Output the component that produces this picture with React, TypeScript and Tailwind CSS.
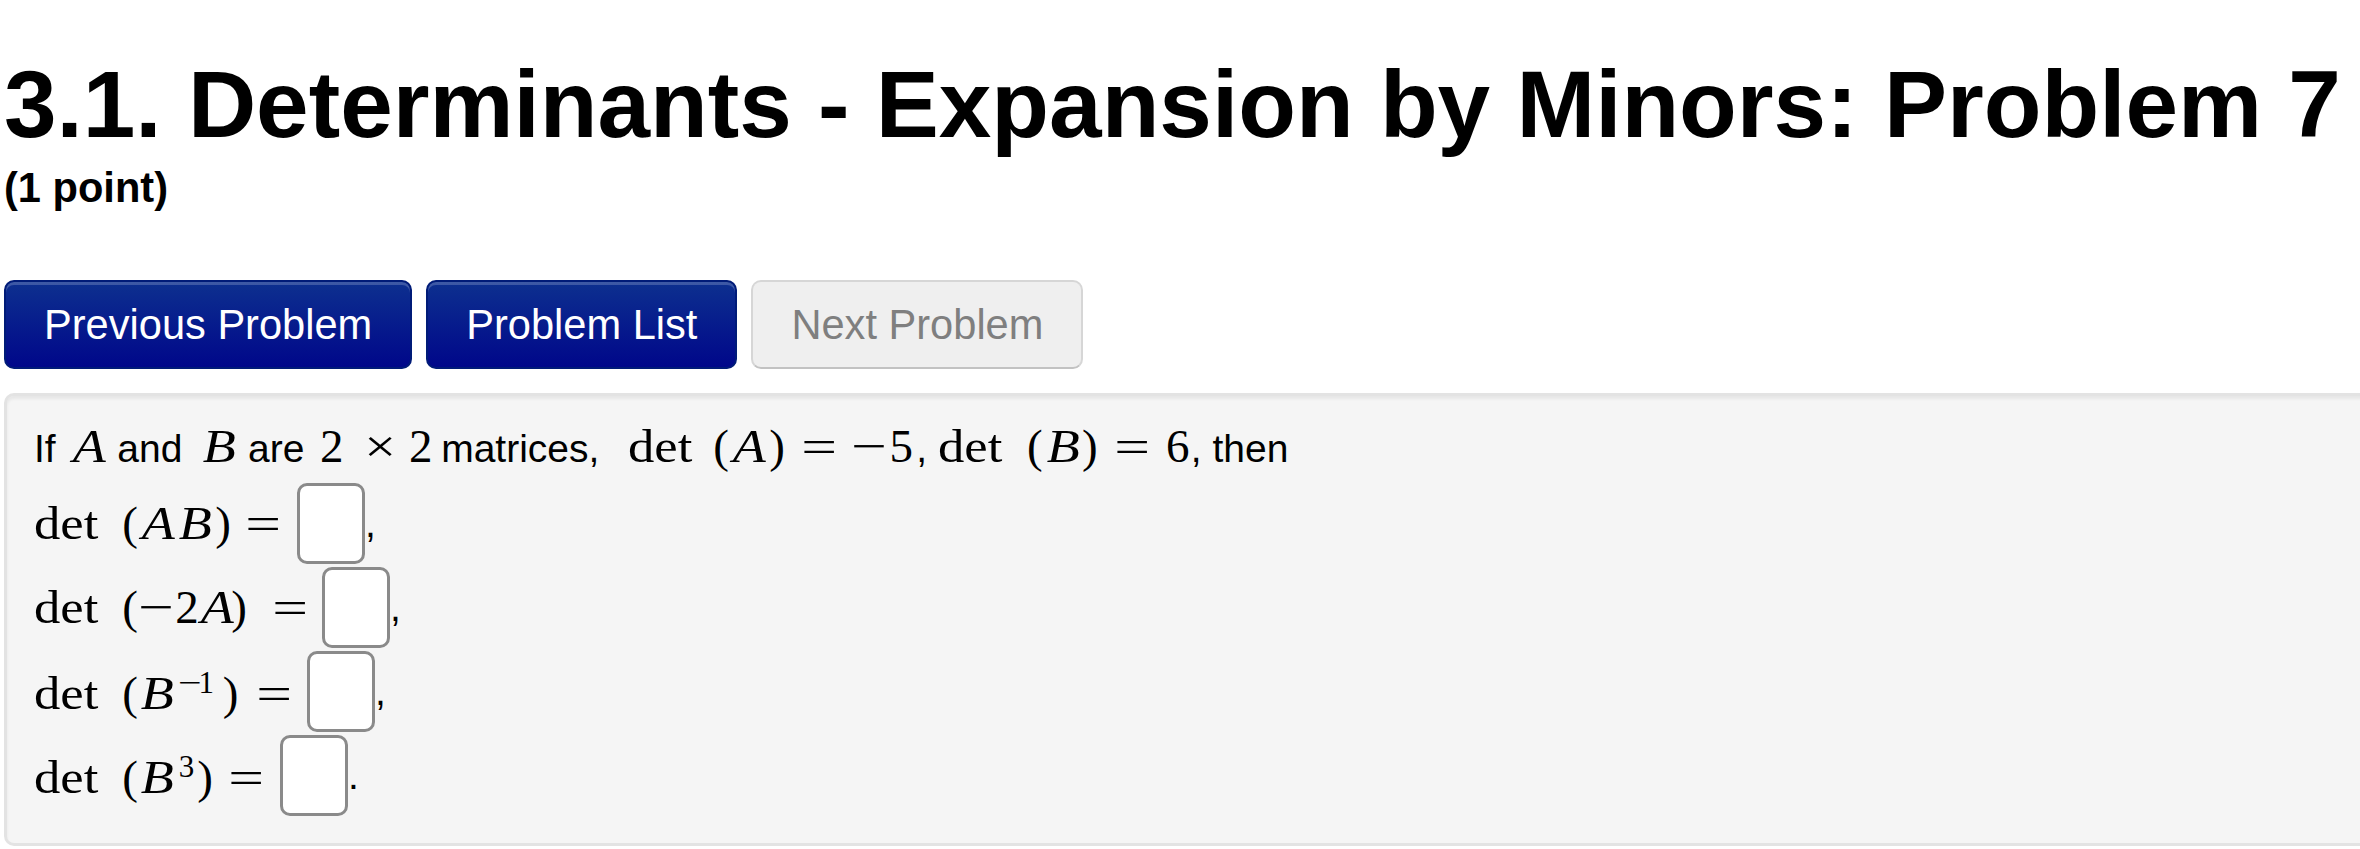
import React from 'react';

const sans = "font-['Liberation_Sans',Arial,sans-serif]";
const serif = "font-['Liberation_Serif','Times_New_Roman',serif] text-[47px] leading-none";

// one math glyph in a fixed-width slot, so the formula spacing follows the TeX layout
function C({ c, children }: { c: string; children: React.ReactNode }) {
  return (
    <span className={`inline-flex justify-center font-['Liberation_Serif','Times_New_Roman',serif] text-[47px] leading-none ${c}`}>
      {children}
    </span>
  );
}

// superscript slot
function S({ c, children }: { c: string; children: React.ReactNode }) {
  return (
    <span className={`inline-flex justify-center font-['Liberation_Serif','Times_New_Roman',serif] text-[31px] leading-none align-[16px] ${c}`}>
      {children}
    </span>
  );
}

// the det operator, left aligned in its slot
function Det({ c }: { c: string }) {
  return (
    <span className={`inline-flex font-['Liberation_Serif','Times_New_Roman',serif] text-[47px] leading-none ${c}`}>
      <span className="inline-block origin-left scale-x-[1.12]">det</span>
    </span>
  );
}

const Eq = () => <span className="inline-block scale-x-[1.35]">=</span>;
const Minus = () => <span className="inline-block scale-x-[1.35]">−</span>;
const It = ({ ch }: { ch: string }) => <i className="inline-block italic scale-x-[1.15]">{ch}</i>;

// answer blank, like the WeBWorK input boxes
function Blank({ c = '' }: { c?: string }) {
  return <span className={`inline-block w-[68px] h-[81px] shrink-0 bg-white border-[3px] border-[#8a8a8a] rounded-[10px] ${c}`} />;
}

function NavButton({ label, disabled = false }: { label: string; disabled?: boolean }) {
  return (
    <button
      className={
        disabled
          ? `h-[89px] px-[38px] flex items-center rounded-[10px] border-2 border-[#d6d6d6] border-b-[#c2c2c2] bg-[#efefef] text-[#7f7f7f] text-[41.6px] leading-none ${sans}`
          : `h-[89px] px-[38px] flex items-center rounded-[10px] border-2 border-[#001b78] bg-[linear-gradient(to_bottom,#0d308f,#00078a)] shadow-[inset_0_3px_0_rgba(255,255,255,0.2)] text-white text-[41.6px] leading-none ${sans}`
      }
    >
      {label}
    </button>
  );
}

export default function App() {
  return (
    <div className={`w-[2360px] h-[849px] overflow-hidden bg-white text-black ${sans}`}>
      <h1 className="pl-[4px] mt-[53px] text-[94.5px] font-bold leading-[1.1] whitespace-nowrap">
        3.1. Determinants - Expansion by Minors: Problem 7
      </h1>
      <div className="pl-[4px] mt-[5px] text-[41.6px] font-bold leading-[52px]">(1 point)</div>

      <div className="pl-[4px] mt-[66px] flex gap-[14px]">
        <NavButton label="Previous Problem" />
        <NavButton label="Problem List" />
        <NavButton label="Next Problem" disabled />
      </div>

      {/* problem body */}
      <div className="ml-[4px] mt-[24px] w-[2400px] border-[3px] border-[#e3e3e3] rounded-[10px] bg-[#f5f5f5] shadow-[inset_0_3px_3px_rgba(0,0,0,0.06)] pt-[20px] pb-[25px] pl-[27px] text-[39px]">
        <div className="h-[66px] leading-[66px] whitespace-pre">
          {'If '}
          <C c="w-[40px] pl-[5px]"><It ch="A" /></C>
          {' and '}
          <C c="w-[44px] pl-[8px]"><It ch="B" /></C>
          {' are '}
          <C c="w-[33px]">2</C>
          <C c="w-[63px]"><span className="inline-block scale-x-[1.2]">×</span></C>
          <C c="w-[19px]">2</C>
          {' matrices, '}
          <Det c="w-[101px] pl-[18px]" />
          <C c="w-[20px]">(</C>
          <C c="w-[37px]"><It ch="A" /></C>
          <C c="w-[18px]">)</C>
          <C c="w-[66px]"><Eq /></C>
          <C c="w-[34px]"><Minus /></C>
          <C c="w-[30px]">5</C>
          {', '}
          <Det c="w-[87px]" />
          <C c="w-[20px]">(</C>
          <C c="w-[36px]"><It ch="B" /></C>
          <C c="w-[18px]">)</C>
          <C c="w-[66px]"><Eq /></C>
          <C c="w-[26px]">6</C>
          {', then'}
        </div>

        <div className="h-[84px] flex items-center whitespace-nowrap">
          <span className={serif}>
            <Det c="w-[86px]" />
            <C c="w-[20px]">(</C>
            <C c="w-[37px]"><It ch="A" /></C>
            <C c="w-[36px]"><It ch="B" /></C>
            <C c="w-[20px]">)</C>
            <C c="w-[60px]"><Eq /></C>
          </span>
          <Blank c="ml-[4px]" />
          <span className="leading-none">,</span>
        </div>

        <div className="h-[84px] flex items-center whitespace-nowrap">
          <span className={serif}>
            <Det c="w-[86px]" />
            <C c="w-[20px]">(</C>
            <C c="w-[32px]"><Minus /></C>
            <C c="w-[30px]">2</C>
            <C c="w-[30px]"><It ch="A" /></C>
            <C c="w-[14px]">)</C>
            <C c="w-[76px] pl-[12px]"><Eq /></C>
          </span>
          <Blank />
          <span className="leading-none">,</span>
        </div>

        <div className="h-[84px] flex items-center whitespace-nowrap">
          <span className={serif}>
            <Det c="w-[86px]" />
            <C c="w-[20px]">(</C>
            <C c="w-[35px]"><It ch="B" /></C>
            <S c="w-[45px]">
              <Minus />1
            </S>
            <C c="w-[21px]">)</C>
            <C c="w-[66px]"><Eq /></C>
          </span>
          <Blank />
          <span className="leading-none">,</span>
        </div>

        <div className="h-[84px] flex items-center whitespace-nowrap">
          <span className={serif}>
            <Det c="w-[86px]" />
            <C c="w-[20px]">(</C>
            <C c="w-[35px]"><It ch="B" /></C>
            <S c="w-[23px]">3</S>
            <C c="w-[14px]">)</C>
            <C c="w-[68px]"><Eq /></C>
          </span>
          <Blank />
          <span className="leading-none">.</span>
        </div>
      </div>
    </div>
  );
}
